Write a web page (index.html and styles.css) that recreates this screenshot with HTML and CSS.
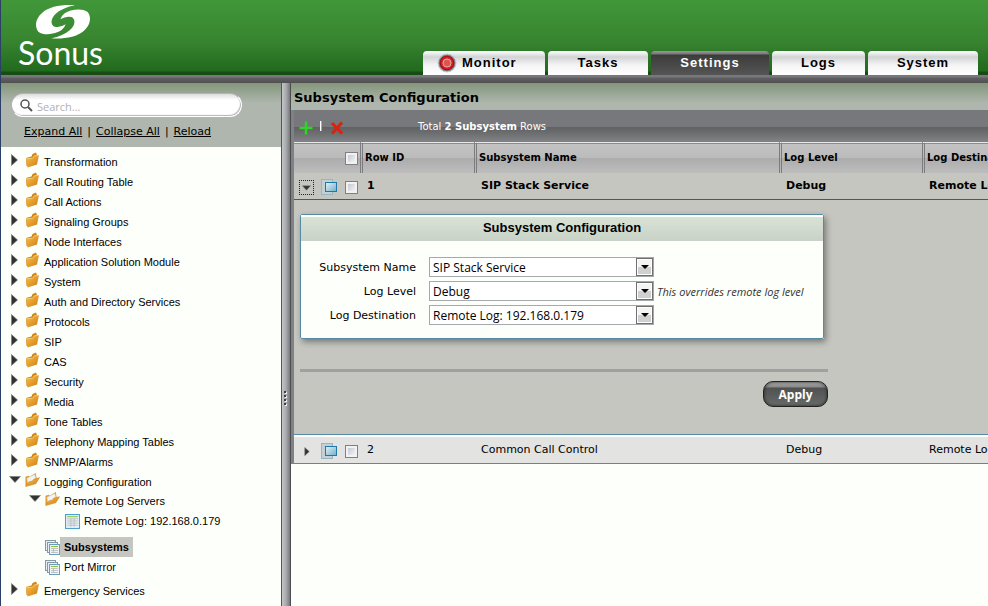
FILE: index.html
```html
<!DOCTYPE html>
<html lang="en">
<head>
    <meta charset="UTF-8">
    <meta name="viewport" content="width=device-width, initial-scale=1.0">
    <title>Sonus - Subsystem Configuration</title>
    <link rel="stylesheet" href="styles.css">
</head>
<body>
    <!-- shared icons -->
    <svg class="sprite" aria-hidden="true">
        <defs>
            <linearGradient id="gold" x1="0" y1="0" x2="1" y2="1">
                <stop offset="0" stop-color="#f9c24d"/>
                <stop offset="1" stop-color="#cf7a10"/>
            </linearGradient>
            <linearGradient id="glass" x1="0" y1="0" x2="1" y2="1">
                <stop offset="0" stop-color="#e6f1f5"/>
                <stop offset="1" stop-color="#6fb0cc"/>
            </linearGradient>
            <radialGradient id="red">
                <stop offset="0" stop-color="#e86a68"/>
                <stop offset="1" stop-color="#c40f12"/>
            </radialGradient>
        </defs>
        <symbol id="closed" viewBox="0 0 7 12">
            <path d="M0.5 0.5v11L6.5 6z" fill="#333" stroke="#777" stroke-width="0.6"/>
        </symbol>
        <symbol id="opened" viewBox="0 0 12 7">
            <path d="M0.5 0.5h11L6 6.5z" fill="#333" stroke="#777" stroke-width="0.6"/>
        </symbol>
        <symbol id="folder" viewBox="0 0 14 16">
            <path d="M0.5 6L6 4.500 7 2l3.500-1.500 1 2.500L11 12 1 14z" fill="#d08618"/>
            <path d="M0.500 6.500L7 6l2-2.500 4.500-0.500-2 9.500L2 15.500z" fill="url(#gold)"/>
            <path d="M0.800 6.800L7 6.200l2-2.400 4-0.500" fill="none" stroke="#ffe09a" stroke-width="0.6"/>
        </symbol>
        <symbol id="folder-open" viewBox="0 0 16 16">
            <path d="M0.500 4.500L4 3.500 5 4.500 10.500 1 11.500 0.500 12.500 7 3 13 0.500 15z" fill="#e09a28"/>
            <path d="M2 6L10.500 2 12 8 3 12z" fill="#f2f3f5" stroke="#c9ccd2" stroke-width="0.5"/>
            <path d="M0.800 15L4 10 8 9 9.500 7 15.500 5.500 11.500 12z" fill="url(#gold)" stroke="#c87d14" stroke-width="0.5"/>
        </symbol>
        <symbol id="form" viewBox="0 0 14 14">
            <rect x="0.5" y="0.5" width="13" height="13" fill="#e9f4fa" stroke="#4aa3cf"/>
            <path d="M2 2.500h10" stroke="#8cc63f"/>
            <path d="M2 4.500h10M2 6.500h10M2 8.500h10M2 10.500h10M5.500 4v8M8.500 4v8" stroke="#b5b9bd" stroke-width="0.8"/>
        </symbol>
        <symbol id="forms" viewBox="0 0 15 15">
            <rect x="0.5" y="0.5" width="10" height="10" fill="#e9eff2" stroke="#8499a5"/>
            <rect x="2.5" y="2.5" width="10" height="10" fill="#e9eff2" stroke="#8499a5"/>
            <rect x="4.5" y="4.5" width="10" height="10" fill="#eef3f5" stroke="#6f9fb8"/>
            <path d="M6 6.500h7" stroke="#8cc63f"/>
            <path d="M6 8.500h7M6 10.500h7M6 12.500h7M8.500 8v5" stroke="#b5b9bd" stroke-width="0.8"/>
        </symbol>
        <symbol id="popup" viewBox="0 0 17 17">
            <rect x="0.5" y="0.5" width="11" height="15" fill="#c3d0d4" stroke="#98b5c2"/>
            <rect x="4.5" y="3.5" width="11" height="9" fill="url(#glass)" stroke="#1f78a8"/>
        </symbol>
    </svg>

    <header class="banner">
        <div class="logo">
            <svg class="logo-mark" viewBox="108 12 168 108" aria-hidden="true">
                <path d="M228 16C190 13 150 20 130 38C108 56 107 82 118 95C135 108 170 103 187 91Q198 82 200 73Q183 84 167 80C152 74 156 53 172 40Q192 23 228 16z" fill="#fff"/>
                <path d="M157 115C194 118 234 111 254 93C276 75 277 49 266 36C249 23 214 28 197 40Q186 49 184 58Q201 47 217 51C232 57 228 78 212 91Q192 108 157 115z" fill="#fff"/>
            </svg>
            <span class="logo-text">Sonus</span>
        </div>
        <nav class="tabs">
            <a href="#" class="tab tab-monitor">
                <svg width="20" height="20" viewBox="0 0 20 20" aria-hidden="true">
                    <circle cx="10" cy="10" r="9" fill="#7d8b95" stroke="#c5cdd3"/>
                    <circle cx="10" cy="10" r="7" fill="url(#red)" stroke="#a30b0e"/>
                    <circle cx="10" cy="10" r="4" fill="#dd5553" stroke="#f2a3a0"/>
                </svg>
                Monitor
            </a>
            <a href="#" class="tab tab-tasks">Tasks</a>
            <a href="#" class="tab tab-settings active">Settings</a>
            <a href="#" class="tab tab-logs">Logs</a>
            <a href="#" class="tab tab-system">System</a>
        </nav>
    </header>
    <div class="banner-line"></div>

    <div class="workspace">
        <aside class="sidebar">
            <div class="sidebar-head">
                <label class="search">
                    <svg width="13" height="13" viewBox="0 0 13 13" aria-hidden="true">
                        <circle cx="5" cy="5" r="4" fill="none" stroke="#555" stroke-width="1.5"/>
                        <path d="M8 8l4 4" stroke="#555" stroke-width="2"/>
                    </svg>
                    <input type="text" placeholder="Search..." aria-label="Search">
                </label>
                <div class="tree-links">
                    <a href="#">Expand All</a><span>|</span><a href="#">Collapse All</a><span>|</span><a href="#">Reload</a>
                </div>
            </div>
            <ul class="tree">
                <li class="node"><svg class="arrow"><use href="#closed"/></svg><svg class="folder"><use href="#folder"/></svg><a href="#">Transformation</a></li>
                <li class="node"><svg class="arrow"><use href="#closed"/></svg><svg class="folder"><use href="#folder"/></svg><a href="#">Call Routing Table</a></li>
                <li class="node"><svg class="arrow"><use href="#closed"/></svg><svg class="folder"><use href="#folder"/></svg><a href="#">Call Actions</a></li>
                <li class="node"><svg class="arrow"><use href="#closed"/></svg><svg class="folder"><use href="#folder"/></svg><a href="#">Signaling Groups</a></li>
                <li class="node"><svg class="arrow"><use href="#closed"/></svg><svg class="folder"><use href="#folder"/></svg><a href="#">Node Interfaces</a></li>
                <li class="node"><svg class="arrow"><use href="#closed"/></svg><svg class="folder"><use href="#folder"/></svg><a href="#">Application Solution Module</a></li>
                <li class="node"><svg class="arrow"><use href="#closed"/></svg><svg class="folder"><use href="#folder"/></svg><a href="#">System</a></li>
                <li class="node"><svg class="arrow"><use href="#closed"/></svg><svg class="folder"><use href="#folder"/></svg><a href="#">Auth and Directory Services</a></li>
                <li class="node"><svg class="arrow"><use href="#closed"/></svg><svg class="folder"><use href="#folder"/></svg><a href="#">Protocols</a></li>
                <li class="node"><svg class="arrow"><use href="#closed"/></svg><svg class="folder"><use href="#folder"/></svg><a href="#">SIP</a></li>
                <li class="node"><svg class="arrow"><use href="#closed"/></svg><svg class="folder"><use href="#folder"/></svg><a href="#">CAS</a></li>
                <li class="node"><svg class="arrow"><use href="#closed"/></svg><svg class="folder"><use href="#folder"/></svg><a href="#">Security</a></li>
                <li class="node"><svg class="arrow"><use href="#closed"/></svg><svg class="folder"><use href="#folder"/></svg><a href="#">Media</a></li>
                <li class="node"><svg class="arrow"><use href="#closed"/></svg><svg class="folder"><use href="#folder"/></svg><a href="#">Tone Tables</a></li>
                <li class="node"><svg class="arrow"><use href="#closed"/></svg><svg class="folder"><use href="#folder"/></svg><a href="#">Telephony Mapping Tables</a></li>
                <li class="node"><svg class="arrow"><use href="#closed"/></svg><svg class="folder"><use href="#folder"/></svg><a href="#">SNMP/Alarms</a></li>
                <li class="node"><svg class="arrow open"><use href="#opened"/></svg><svg class="folder"><use href="#folder-open"/></svg><a href="#">Logging Configuration</a></li>
                <li>
                    <ul class="subtree">
                        <li class="node"><svg class="arrow open"><use href="#opened"/></svg><svg class="folder"><use href="#folder-open"/></svg><a href="#">Remote Log Servers</a></li>
                        <li>
                            <ul class="leaves">
                                <li class="node leaf"><svg class="page"><use href="#form"/></svg><a href="#">Remote Log: 192.168.0.179</a></li>
                            </ul>
                        </li>
                        <li class="node leaf"><svg class="page"><use href="#forms"/></svg><a href="#" class="selected">Subsystems</a></li>
                        <li class="node leaf"><svg class="page"><use href="#forms"/></svg><a href="#">Port Mirror</a></li>
                    </ul>
                </li>
                <li class="node"><svg class="arrow"><use href="#closed"/></svg><svg class="folder"><use href="#folder"/></svg><a href="#">Emergency Services</a></li>
            </ul>
        </aside>

        <div class="splitter"><i></i><i></i><i></i><i></i></div>

        <main class="content">
            <h1>Subsystem Configuration</h1>
            <div class="grid">
                <div class="toolbar">
                    <button type="button" aria-label="Add">
                        <svg width="14" height="14" viewBox="0 0 14 14"><path d="M7 0.500v13M0.500 7h13" stroke="#2fd425" stroke-width="2.5"/></svg>
                    </button>
                    <span class="divider"></span>
                    <button type="button" aria-label="Delete">
                        <svg width="14" height="14" viewBox="0 0 14 14"><path d="M2 2l10 10.500M12 1.500L2 12.500" stroke="#d9220f" stroke-width="3"/></svg>
                    </button>
                    <p>Total <b>2 Subsystem</b> Rows</p>
                </div>
                <table>
                    <colgroup>
                        <col class="col-tools">
                        <col class="col-id">
                        <col class="col-name">
                        <col class="col-level">
                        <col>
                    </colgroup>
                    <thead>
                        <tr>
                            <th><div class="tools"><input type="checkbox" aria-label="Select all rows"></div></th>
                            <th>Row ID</th>
                            <th>Subsystem Name</th>
                            <th>Log Level</th>
                            <th>Log Destination</th>
                        </tr>
                    </thead>
                    <tbody>
                        <tr class="row current">
                            <td>
                                <div class="tools">
                                    <button type="button" class="toggle focused" aria-label="Collapse row 1"><svg width="9" height="6"><use href="#opened"/></svg></button>
                                    <button type="button" aria-label="Open row 1"><svg width="17" height="17"><use href="#popup"/></svg></button>
                                    <input type="checkbox" aria-label="Select row 1">
                                </div>
                            </td>
                            <td>1</td>
                            <td>SIP Stack Service</td>
                            <td>Debug</td>
                            <td>Remote Log: 192.168.0.179</td>
                        </tr>
                        <tr class="detail">
                            <td colspan="5">
                                <form class="detail-form">
                                    <fieldset class="panel">
                                        <h2>Subsystem Configuration</h2>
                                        <div class="fields">
                                            <div class="field">
                                                <label for="name">Subsystem Name</label>
                                                <div class="select"><select id="name"><option>SIP Stack Service</option></select></div>
                                            </div>
                                            <div class="field">
                                                <label for="level">Log Level</label>
                                                <div class="select"><select id="level"><option>Debug</option></select></div>
                                                <em>This overrides remote log level</em>
                                            </div>
                                            <div class="field">
                                                <label for="destination">Log Destination</label>
                                                <div class="select"><select id="destination"><option>Remote Log: 192.168.0.179</option></select></div>
                                            </div>
                                        </div>
                                    </fieldset>
                                    <div class="actions">
                                        <button type="submit" class="apply">Apply</button>
                                    </div>
                                </form>
                            </td>
                        </tr>
                        <tr class="row other">
                            <td>
                                <div class="tools">
                                    <button type="button" class="toggle" aria-label="Expand row 2"><svg width="6" height="9"><use href="#closed"/></svg></button>
                                    <button type="button" aria-label="Open row 2"><svg width="17" height="17"><use href="#popup"/></svg></button>
                                    <input type="checkbox" aria-label="Select row 2">
                                </div>
                            </td>
                            <td>2</td>
                            <td>Common Call Control</td>
                            <td>Debug</td>
                            <td>Remote Log: 192.168.0.179</td>
                        </tr>
                    </tbody>
                </table>
            </div>
        </main>
    </div>
</body>
</html>
```
FILE: styles.css
```css
:root {
    --verdana: "DejaVu Sans", sans-serif;
    --arial: "Liberation Sans", sans-serif;
    --segoe: "Open Sans", sans-serif;
    --head-gradient: linear-gradient(#84967a, #aeb6ae 20px);
    --blue-line: #558ca3;
    --row-color: #c6c6c1;
}

*, *::before, *::after {
    margin: 0;
    padding: 0;
    box-sizing: border-box;
}

body {
    display: flex;
    flex-direction: column;
    height: 100vh;
    overflow: hidden;
    border-left: 1px solid #2b4066;
    background: #fdfffb;
    color: #000;
    font-family: var(--verdana);
    font-size: 11px;
}

a {
    color: inherit;
}

ul {
    list-style: none;
}

button {
    border: none;
    background: none;
    cursor: pointer;
}

svg {
    display: block;
    flex: none;
}

.sprite {
    position: absolute;
    width: 0;
    height: 0;
}

/* banner */
.banner {
    display: flex;
    justify-content: space-between;
    flex: none;
    height: 75px;
    padding: 0 10px 0 17px;
    background: linear-gradient(#41973a, #388530 40px, #226a1e 71px, #184c15 72px, #184c15);
}

.logo {
    display: flex;
    flex-direction: column;
    align-items: center;
    padding-top: 4px;
}

.logo-mark {
    width: 56px;
    height: 36px;
    margin-left: 6px;
}

.logo-text {
    color: #fff;
    font: 32px/26px Lato, sans-serif;
}

.tabs {
    display: flex;
    align-items: flex-end;
    gap: 3px;
}

.tab {
    display: flex;
    align-items: center;
    justify-content: center;
    gap: 5px;
    height: 24px;
    border-radius: 4px 4px 0 0;
    background: linear-gradient(#fff, #d2d3d5 6px, #f4f4f5 14px, #fff);
    font: bold 13px/24px var(--arial);
    letter-spacing: 1px;
    text-decoration: none;
}

.tab-monitor {
    justify-content: flex-start;
    width: 122px;
    padding-left: 14px;
}

.tab-tasks {
    width: 100px;
}

.tab-settings {
    width: 118px;
}

.tab-logs {
    width: 93px;
}

.tab-system {
    width: 110px;
}

.tab.active {
    background: linear-gradient(#999, #777 3px, #3c3c3c 4px, #555);
    color: #fff;
}

.banner-line {
    flex: none;
    height: 8px;
    background: linear-gradient(#77787b 2px, #606062 3px, #505052);
}

/* sidebar */
.workspace {
    display: flex;
    flex: 1;
    min-height: 0;
}

.sidebar {
    flex: none;
    width: 280px;
}

.sidebar-head {
    height: 64px;
    padding: 10px;
    background: var(--head-gradient);
}

.search {
    display: flex;
    align-items: center;
    gap: 4px;
    width: 231px;
    height: 24px;
    padding: 0 8px;
    border: 1px solid #b4b4b8;
    border-bottom-color: #fff;
    border-right-color: #fff;
    border-radius: 12px;
    background: linear-gradient(#dcdce0, #fff 6px);
    box-shadow: inset -1px -1px 1px #b4b4b8;
}

.search input {
    flex: 1;
    min-width: 0;
    padding-top: 4px;
    border: none;
    outline: none;
    background: none;
    font: 11px/18px var(--segoe);
}

.search input::placeholder {
    color: #b0b0b4;
}

.tree-links {
    display: flex;
    gap: 5px;
    padding: 7px 13px;
    line-height: 16px;
}

.tree {
    padding-top: 5px;
    font: 11px/20px var(--arial);
}

.node {
    display: flex;
    height: 20px;
}

.node a {
    padding-left: 4px;
    text-decoration: none;
    white-space: nowrap;
}

.arrow {
    width: 7px;
    height: 12px;
    margin: 2px 7px 0 10px;
}

.arrow.open {
    width: 12px;
    height: 7px;
    margin: 4px 4px 0 8px;
}

.folder {
    width: 15px;
    height: 16px;
}

.subtree {
    margin-top: -1px;
    padding: 0 0 4px 20px;
}

.leaves {
    padding: 0 0 6px 20px;
}

.leaf {
    padding-left: 24px;
}

.page {
    width: 15px;
    height: 15px;
    margin-top: 3px;
}

.tree .selected {
    background: #c6c6c1;
    font-weight: bold;
    padding-right: 4px;
}

.splitter {
    display: flex;
    flex-direction: column;
    gap: 2px;
    flex: none;
    width: 10px;
    padding: 308px 0 0 2px;
    border-left: 1px solid #55565a;
    border-right: 1px solid #4c4d50;
    background: linear-gradient(to right, #c4c5c8, #a9aaad 4px, #77787b);
}

.splitter i {
    width: 2px;
    height: 2px;
    background: #3f4043;
    box-shadow: 1px 1px #eee;
}

/* content */
.content {
    flex: 1;
    min-width: 0;
    overflow: hidden;
}

h1 {
    height: 27px;
    padding-left: 3px;
    background: var(--head-gradient);
    font-size: 13px;
    line-height: 29px;
}

.grid {
    border-left: 3px solid #808184;
}

.toolbar {
    display: flex;
    align-items: center;
    height: 32px;
    padding-left: 5px;
    background: linear-gradient(#77787b 17px, #606163 17px, #6e6f71 24px, #808184 31px);
    color: #fff;
    font-size: 10px;
}

.toolbar button {
    padding-top: 3px;
}

.divider {
    width: 2px;
    height: 10px;
    margin: 0 8px 0 7px;
    border-left: 1px solid #fff;
    border-right: 1px solid #c9a56a;
}

.toolbar p {
    padding-left: 74px;
}

table {
    width: 100%;
    min-width: 840px;
    border-collapse: separate;
    border-spacing: 0;
    table-layout: fixed;
}

.col-tools {
    width: 66px;
}

.col-id {
    width: 114px;
}

.col-name {
    width: 305px;
}

.col-level {
    width: 143px;
}

th {
    height: 31px;
    padding: 0 0 2px 2px;
    border-top: 1px solid #e8e8e8;
    border-left: 3px double #7c7c7e;
    background: linear-gradient(#8c8c8c 1px, #c2c2c2 1px, #bbb 15px, #acacac 15px, #bdbdbd);
    font-size: 10px;
    text-align: left;
}

th:first-child {
    padding: 0;
    border-left: none;
}

th .tools {
    justify-content: flex-end;
    padding-right: 2px;
}

.tools {
    display: flex;
    align-items: center;
    gap: 7px;
    padding: 0 2px 0 5px;
}

.toggle {
    display: flex;
    align-items: center;
    justify-content: center;
    width: 15px;
    height: 15px;
    border: 1px dotted transparent;
}

.toggle.focused {
    border-color: #222;
}

input[type="checkbox"] {
    appearance: none;
    width: 13px;
    height: 13px;
    border: 1px solid #7f8080;
    background: linear-gradient(135deg, #b9bdc8, #fff);
    box-shadow: inset 0 0 0 2px #f2f2f2;
}

.row td {
    height: 27px;
    padding: 0 0 2px 7px;
    white-space: nowrap;
}

.row td:first-child {
    padding: 3px 0 0;
}

.current td {
    border-bottom: 1px solid #55565a;
    background: var(--row-color);
    font-weight: bold;
}

.other td {
    height: 29px;
    border-top: 2px solid #fff;
    border-bottom: 1px solid var(--blue-line);
    background: #e3e3e1;
}

.detail td {
    padding: 14px 6px 27px;
    border-bottom: 1px solid var(--blue-line);
    background: var(--row-color);
}

.detail-form {
    width: 528px;
}

.panel {
    width: 524px;
    border: 1px solid var(--blue-line);
    border-radius: 2px;
    background: #fdfffb;
    box-shadow: 2px 3px 6px rgba(0, 0, 0, 0.4);
}

h2 {
    height: 26px;
    border-top: 2px solid #fff;
    background: linear-gradient(#d8e3d6, #c8d2c6);
    font: bold 13px/22px var(--arial);
    text-align: center;
}

.fields {
    display: grid;
    gap: 4px;
    padding: 16px 0 13px;
}

.field {
    display: flex;
    align-items: center;
    height: 20px;
}

.field label {
    width: 115px;
    margin-right: 13px;
    text-align: right;
}

.select {
    position: relative;
    width: 225px;
    height: 20px;
}

.select select {
    appearance: none;
    width: 100%;
    height: 100%;
    padding: 2px 0 0 3px;
    border: 1px solid #a5a8ad;
    border-radius: 0;
    background: #fff;
    color: #000;
    font: 12px/16px var(--segoe);
}

/* drop-down button drawn over the right end of the select */
.select::before {
    content: "";
    position: absolute;
    top: 1px;
    right: 1px;
    width: 17px;
    height: 18px;
    border: 1px solid #707070;
    background: linear-gradient(#f4f4f4 50%, #d0d0d0 50%);
    box-shadow: inset 0 0 0 1px #fff;
    pointer-events: none;
}

.select::after {
    content: "";
    position: absolute;
    top: 8px;
    right: 5px;
    border: 4px solid transparent;
    border-top-color: #000;
    border-bottom: none;
    pointer-events: none;
}

.field em {
    padding: 2px 0 0 3px;
    color: #333;
    font: italic 11px/18px var(--segoe);
}

.actions {
    display: flex;
    justify-content: flex-end;
    margin-top: 30px;
    padding-top: 9px;
    border-top: 3px solid #a0a09e;
}

.apply {
    width: 65px;
    height: 26px;
    padding-top: 2px;
    border: 1px solid #222;
    border-radius: 10px;
    background: linear-gradient(#aaa, #888 5px, #4f5250 6px, #676b68);
    box-shadow: inset 0 0 3px #222;
    color: #fff;
    font: bold 12px/22px var(--segoe);
}
```
